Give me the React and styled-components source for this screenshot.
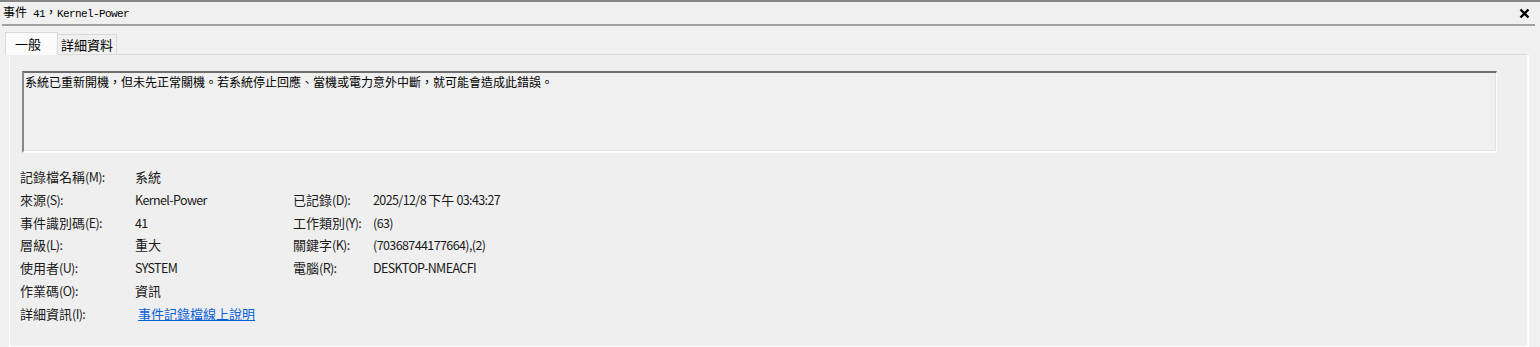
import React from "react";
import styled, { createGlobalStyle } from "styled-components";

const GlobalStyle = createGlobalStyle`
  html, body {
    margin: 0;
    padding: 0;
    background: #f0f0f0;
  }
  body {
    font-family: "Noto Sans CJK TC", sans-serif;
    font-size: 13px;
    color: #000;
  }
`;

const Window = styled.div`
  width: 1540px;
  height: 347px;
  overflow: hidden;
  border-top: 2px solid #858585;
  box-sizing: border-box;
  display: flex;
  flex-direction: column;
`;

const TitleBar = styled.div`
  height: 22px;
  display: flex;
  align-items: center;
  padding: 0 10px 0 3px;
`;

const Title = styled.div`
  flex: 1;
  font-size: 12px;
  line-height: 22px;
  white-space: pre;
`;

const Mono = styled.span`
  font-family: "Liberation Mono", "Noto Sans CJK TC", monospace;
  font-size: 11px;
  letter-spacing: -0.6px;
`;

const Close = styled.button`
  border: 0;
  padding: 0;
  background: none;
  width: 11px;
  height: 11px;
  display: flex;
`;

const Rule = styled.div`
  height: 2px;
  margin: 0 5px 0 2px;
  background: #a0a0a0;
`;

const Tabs = styled.div`
  display: flex;
  align-items: flex-end;
  padding: 6px 0 0 5px;
  height: 22px;
`;

const Tab = styled.div`
  box-sizing: border-box;
  height: ${(p) => (p.$active ? "23px" : "20px")};
  padding: ${(p) => (p.$active ? "0 16px 1px 9px" : "0 3px")};
  display: flex;
  align-items: center;
  font-size: 13px;
  border: 1px solid #d9d9d9;
  border-bottom: none;
  background: ${(p) => (p.$active ? "#fbfbfb" : "#f0f0f0")};
  margin-bottom: ${(p) => (p.$active ? "-1px" : "0")};
  position: relative;
  z-index: ${(p) => (p.$active ? 1 : 0)};
  & + & {
    border-left: none;
  }
`;

const Panel = styled.div`
  flex: 1;
  margin: 0 11px 0 9px;
  border: 1px solid #fdfdfd;
  border-top-color: #dadada;
  border-right: 2px solid #fdfdfd;
  background: #efefef;
  padding: 16px 0 0 12px;
`;

const Message = styled.div`
  box-sizing: border-box;
  width: 1475px;
  height: 82px;
  border-style: solid;
  border-width: 2px 1px 2px 2px;
  border-color: #6e6e6e #fdfdfd #fdfdfd #8a8a8a;
  box-shadow: inset 0 -1px 0 #e2e2e2, inset -1px 0 0 #e2e2e2;
  background: #f0f0f0;
  padding: 1px 0 0 1px;
  font-size: 12px;
  line-height: 16px;
`;

const Info = styled.div`
  display: grid;
  grid-template-columns: 115px 158px 80px 1fr;
  grid-auto-rows: 22.83px;
  align-items: center;
  margin: 12px 0 0 -2px;
`;

const Cell = styled.div`
  white-space: nowrap;
  color: #1a1a1a;
  font-size: 13px;
  grid-column: ${(p) => p.$col || "auto"};
`;

const Latn = styled.span`
  font-size: 12.5px;
  letter-spacing: -0.6px;
`;

const HelpLink = styled.a`
  color: #0a5ed7;
  text-decoration: underline;
  margin-left: 3px;
  cursor: pointer;
`;

// Latin runs are squeezed a little so they keep the narrow dialog-font widths
const CJK = /[\u3000-\u9fff\uff00-\uffef]/;
const Mixed = ({ children }) =>
  String(children)
    .split(/([\u3000-\u9fff\uff00-\uffef]+)/)
    .filter(Boolean)
    .map((s, i) => (CJK.test(s) ? s : <Latn key={i}>{s}</Latn>));

const rows = [
  ["記錄檔名稱(M):", "系統"],
  ["來源(S):", "Kernel-Power", "已記錄(D):", "2025/12/8 下午 03:43:27"],
  ["事件識別碼(E):", "41", "工作類別(Y):", "(63)"],
  ["層級(L):", "重大", "關鍵字(K):", "(70368744177664),(2)"],
  ["使用者(U):", "SYSTEM", "電腦(R):", "DESKTOP-NMEACFI"],
  ["作業碼(O):", "資訊"],
];

export default function App() {
  return (
    <>
      <GlobalStyle />
      <Window>
        <TitleBar>
          <Title>
            事件<Mono> 41</Mono>，<Mono>Kernel-Power</Mono>
          </Title>
          <Close aria-label="關閉">
            <svg width="11" height="11" viewBox="0 0 11 11">
              <path d="M1.5 1.5 L9.5 9.5 M9.5 1.5 L1.5 9.5" stroke="#000" strokeWidth="2.4" />
            </svg>
          </Close>
        </TitleBar>
        <Rule />
        <Tabs>
          <Tab $active>一般</Tab>
          <Tab>詳細資料</Tab>
        </Tabs>
        <Panel>
          <Message>
            系統已重新開機，但未先正常關機。若系統停止回應、當機或電力意外中斷，就可能會造成此錯誤。
          </Message>
          <Info>
            {rows.map((r) => (
              <React.Fragment key={r[0]}>
                <Cell $col="1"><Mixed>{r[0]}</Mixed></Cell>
                <Cell><Mixed>{r[1]}</Mixed></Cell>
                {r[2] && <Cell><Mixed>{r[2]}</Mixed></Cell>}
                {r[3] && <Cell><Mixed>{r[3]}</Mixed></Cell>}
              </React.Fragment>
            ))}
            <Cell $col="1"><Mixed>詳細資訊(I):</Mixed></Cell>
            <Cell>
              <HelpLink>事件記錄檔線上說明</HelpLink>
            </Cell>
          </Info>
        </Panel>
      </Window>
    </>
  );
}
